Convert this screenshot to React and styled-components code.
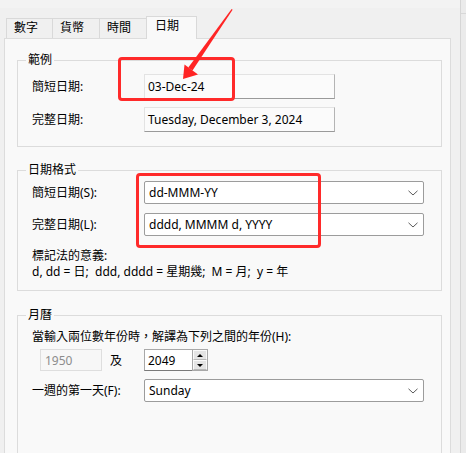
import React from 'react';
import styled, { createGlobalStyle } from 'styled-components';

const GlobalStyle = createGlobalStyle`
  html, body {
    margin: 0;
    padding: 0;
    background: #f0f0f0;
  }

  body {
    font-family: "Noto Sans", "Noto Sans CJK TC", sans-serif;
    font-size: 12px;
    color: #000;
  }
`;

const TABS = ['數字', '貨幣', '時間', '日期'];

export default function App() {
  return (
    <Screen>
      <GlobalStyle />
      <Main>
        <TopStrip />
        <TabBar>
          {TABS.map((tab, i) => (
            <Tab key={tab} $active={i === TABS.length - 1}>
              {tab}
            </Tab>
          ))}
        </TabBar>
        <Panel>
          <Group>
            <Legend>範例</Legend>
            <GroupBody>
              <FieldRow>
                <Label>簡短日期:</Label>
                <ReadOnlyBox>03-Dec-24</ReadOnlyBox>
              </FieldRow>
              <FieldRow>
                <Label>完整日期:</Label>
                <ReadOnlyBox>Tuesday, December 3, 2024</ReadOnlyBox>
              </FieldRow>
            </GroupBody>
          </Group>

          <Group $top={15}>
            <Legend>日期格式</Legend>
            <GroupBody $padTop={3} $padBottom={10} $gap={9}>
              <FieldRow>
                <Label>簡短日期(S):</Label>
                <Combo>
                  dd-MMM-YY
                  <Chevron />
                </Combo>
              </FieldRow>
              <FieldRow>
                <Label>完整日期(L):</Label>
                <Combo>
                  dddd, MMMM d, YYYY
                  <Chevron />
                </Combo>
              </FieldRow>
              <Notes>
                <div>標記法的意義:</div>
                <div>d, dd = 日;&nbsp; ddd, dddd = 星期幾;&nbsp; M = 月;&nbsp; y = 年</div>
              </Notes>
            </GroupBody>
          </Group>

          <Group $top={16} $tall>
            <Legend>月曆</Legend>
            <GroupBody $gap={4}>
              <Line>當輸入兩位數年份時，解譯為下列之間的年份(H):</Line>
              <YearRow>
                <DisabledBox>1950</DisabledBox>
                <And>及</And>
                <Spin>
                  <SpinText>2049</SpinText>
                  <SpinButtons>
                    <SpinButton>
                      <Tri $up />
                    </SpinButton>
                    <SpinButton>
                      <Tri />
                    </SpinButton>
                  </SpinButtons>
                </Spin>
              </YearRow>
              <FieldRow $space={4}>
                <Label>一週的第一天(F):</Label>
                <Combo>
                  Sunday
                  <Chevron />
                </Combo>
              </FieldRow>
            </GroupBody>
          </Group>
        </Panel>
      </Main>
      <SideStrip>
        <SideLine />
      </SideStrip>

      <Highlight style={{ left: 118, top: 57, width: 117, height: 44 }} />
      <Highlight style={{ left: 136, top: 173, width: 185, height: 75 }} />
      <ArrowSvg width="466" height="453" viewBox="0 0 466 453">
        <polygon points="231.6,9 232.6,9.8 192.5,70.5 188.3,67.6" fill="#ff2424" />
        <polygon points="183,79 184.5,64.5 198,74.5" fill="#ff2424" />
      </ArrowSvg>
    </Screen>
  );
}

function Chevron() {
  return (
    <ChevronSvg width="10" height="6" viewBox="0 0 10 6">
      <polyline points="0.5,0.8 5,5 9.5,0.8" fill="none" stroke="#5a5a5a" strokeWidth="1" />
    </ChevronSvg>
  );
}

const Screen = styled.div`
  position: relative;
  width: 466px;
  height: 453px;
  display: flex;
  overflow: hidden;
  background: #f0f0f0;
`;

const Main = styled.div`
  width: 460px;
  flex-shrink: 0;
  border-right: 1px solid #d6d6d6;
  display: flex;
  flex-direction: column;
`;

const TopStrip = styled.div`
  flex-shrink: 0;
  height: 8px;
  background: #f3f3f3;
`;

const SideStrip = styled.div`
  flex: 1;
  background: #ebebeb;
  padding-top: 13px;
`;

const SideLine = styled.div`
  height: 1px;
  background: #d8d8d8;
`;

const TabBar = styled.div`
  flex-shrink: 0;
  display: flex;
  align-items: flex-end;
  height: 22px;
  margin-top: 8px;
  padding-left: 6px;
`;

const Tab = styled.div`
  position: relative;
  z-index: ${(p) => (p.$active ? 2 : 1)};
  box-sizing: border-box;
  height: ${(p) => (p.$active ? '23px' : '20px')};
  width: ${(p) => (p.$active ? '51px' : '48px')};
  margin-bottom: ${(p) => (p.$active ? '-1px' : '0')};
  padding: ${(p) => (p.$active ? '1px 0 0 8px' : '1px 0 0 7px')};
  margin-left: -1px;
  background: ${(p) => (p.$active ? '#f9f9f9' : '#f0f0f0')};
  border: 1px solid #d9d9d9;
  border-bottom: none;
  line-height: 16px;

  &:first-child {
    margin-left: 0;
    width: 47px;
  }
`;

const Panel = styled.div`
  flex: 1 0 auto;
  margin-left: 4px;
  width: 447px;
  box-sizing: border-box;
  background: #f9f9f9;
  border: 1px solid #dcdcdc;
  border-bottom: none;
  padding: 13px 8px 0 12px;
`;

const Group = styled.fieldset`
  margin: ${(p) => p.$top || 0}px 0 0 0;
  padding: 0;
  border: 1px solid #dcdcdc;
  min-width: 0;
  height: ${(p) => (p.$tall ? '200px' : 'auto')};
`;

const Legend = styled.legend`
  margin-left: 8px;
  padding: 0 2px;
  line-height: 16px;
`;

const GroupBody = styled.div`
  display: flex;
  flex-direction: column;
  gap: ${(p) => p.$gap ?? 8}px;
  padding: ${(p) => p.$padTop ?? 6}px 16px ${(p) => p.$padBottom ?? 14}px 14px;
`;

const FieldRow = styled.div`
  display: grid;
  grid-template-columns: 112px 1fr;
  align-items: center;
  margin-top: ${(p) => p.$space || 0}px;
`;

const Label = styled.span`
  line-height: 16px;
`;

const ReadOnlyBox = styled.div`
  box-sizing: border-box;
  width: 191px;
  height: 25px;
  padding: 0 3px;
  display: flex;
  align-items: center;
  background: #fbfbfb;
  border: 1px solid #e3e3e3;
  border-right-color: #b4b4b4;
  border-bottom-color: #9a9a9a;
  line-height: 16px;
`;

const Combo = styled.div`
  position: relative;
  box-sizing: border-box;
  width: 280px;
  height: 23px;
  padding: 0 4px;
  display: flex;
  align-items: center;
  background: #fff;
  border: 1px solid #9c9c9c;
  border-radius: 2px;
  line-height: 16px;
`;

const ChevronSvg = styled.svg`
  position: absolute;
  right: 5px;
  top: 8px;
`;

const Notes = styled.div`
  margin-top: 3px;
  line-height: 16px;
`;

const Line = styled.div`
  line-height: 16px;
`;

const YearRow = styled.div`
  display: flex;
  align-items: center;
  padding-left: 8px;
`;

const DisabledBox = styled.div`
  box-sizing: border-box;
  width: 62px;
  height: 22px;
  padding: 0 4px;
  display: flex;
  align-items: center;
  color: #8c8c8c;
  border: 1px solid #dedede;
  background: #f7f7f7;
`;

const And = styled.span`
  width: 42px;
  padding-left: 8px;
  box-sizing: border-box;
`;

const Spin = styled.div`
  display: flex;
  height: 22px;
`;

const SpinText = styled.div`
  box-sizing: border-box;
  width: 48px;
  height: 22px;
  padding: 0 3px;
  display: flex;
  align-items: center;
  background: #fff;
  border: 1px solid #a8a8a8;
  border-right: none;
  border-bottom-color: #7a7a7a;
`;

const SpinButtons = styled.div`
  box-sizing: border-box;
  width: 16px;
  height: 22px;
  display: flex;
  flex-direction: column;
  border: 1px solid #a8a8a8;
  background: #ececec;
`;

const SpinButton = styled.div`
  flex: 1;
  display: flex;
  align-items: center;
  justify-content: center;
  background: #e4e4e4;
  border: 1px solid #fafafa;
  border-bottom-color: #b8b8b8;
`;

const Tri = styled.span`
  width: 0;
  height: 0;
  border-left: 3px solid transparent;
  border-right: 3px solid transparent;
  ${(p) => (p.$up ? 'border-bottom: 3px solid #000;' : 'border-top: 3px solid #000;')}
`;

const Highlight = styled.div`
  position: absolute;
  box-sizing: border-box;
  border: 3px solid #ff2a2a;
  border-radius: 4px;
  pointer-events: none;
`;

const ArrowSvg = styled.svg`
  position: absolute;
  left: 0;
  top: 0;
  pointer-events: none;
`;
